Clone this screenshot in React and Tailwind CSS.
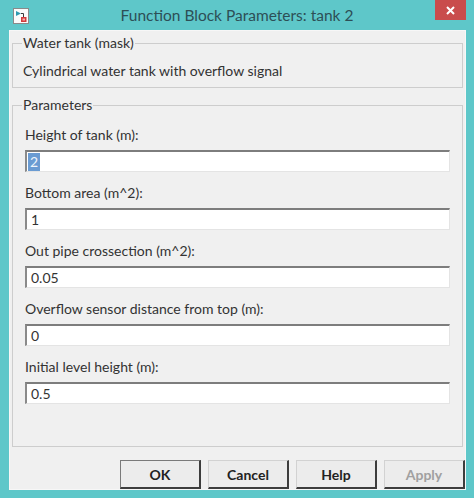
import React from 'react';

const FONT = { fontFamily: 'Lato, "Noto Sans", Arial, sans-serif' };

const params = [
    { label: 'Height of tank (m):', value: '2', selected: true },
    { label: 'Bottom area (m^2):', value: '1' },
    { label: 'Out pipe crossection (m^2):', value: '0.05' },
    { label: 'Overflow sensor distance from top (m):', value: '0' },
    { label: 'Initial level height (m):', value: '0.5' },
];

const BlockIcon = () => (
    <svg width="16" height="16" viewBox="0 0 16 16">
        <rect x="0.5" y="0.5" width="15" height="15" fill="#fbfbfb" stroke="#8a8a8a" />
        <path d="M3 3 L8 5.5 L3 8 Z" fill="#2f9ab0" />
        <path d="M8 5.5 H10.5 V9" stroke="#3a3a3a" strokeWidth="1" fill="none" />
        <rect x="8" y="9" width="5.5" height="5" fill="#d23a3a" />
        <rect x="9.5" y="10.5" width="2.5" height="2" fill="#f5b0b0" />
    </svg>
);

const ParamField = ({ label, value, selected }) => (
    <div className="flex flex-col">
        <label className="h-[20px] leading-[20px] text-[14px] text-[#333]">{label}</label>
        <div className="mt-[5px] h-[22px] bg-white border-t-2 border-l-2 border-t-[#7d7d7d] border-l-[#8a8a8a] border-r border-b border-r-[#e4e4e4] border-b-[#e4e4e4] flex items-center pl-[1px]">
            {selected ? (
                <span className="h-[18px] leading-[18px] px-[2px] bg-[#6a9bd2] text-[#eef4fb] text-[14px]">{value}</span>
            ) : (
                <span className="pl-[3px] leading-[18px] text-[14px] text-[#333]">{value}</span>
            )}
        </div>
    </div>
);

const DialogButton = ({ children, isDefault, disabled }) => (
    <button
        className={
            isDefault
                ? 'w-[81px] h-[29px] bg-[#ececec] border border-[#7a7a7a] border-b-2 border-r-2 border-b-[#3d3d3d] border-r-[#3d3d3d] text-[14px] font-bold text-[#222]'
                : disabled
                ? 'w-[81px] h-[29px] bg-[#ececec] border border-[#d2d2d2] border-b-2 border-r-2 border-b-[#3d3d3d] border-r-[#3d3d3d] text-[14px] font-bold text-[#a0a0a0]'
                : 'w-[81px] h-[29px] bg-[#ececec] border border-[#d2d2d2] border-b-2 border-r-2 border-b-[#3d3d3d] border-r-[#3d3d3d] text-[14px] font-bold text-[#222]'
        }
    >
        {children}
    </button>
);

export default function App() {
    return (
        <div className="w-[474px] h-[498px] bg-[#5ec7c9] flex flex-col overflow-hidden" style={FONT}>
            {/* title bar */}
            <div className="h-[30px] flex items-start shrink-0">
                <div className="w-[60px] pl-[13px] pt-[8px]">
                    <BlockIcon />
                </div>
                <div className="flex-1 text-center text-[15.5px] leading-[30px] text-[#2d4f56]">
                    Function Block Parameters: tank 2
                </div>
                <div className="w-[60px] flex justify-end pr-[8px]">
                    <div className="w-[31px] h-[20px] bg-[#c94c4c] flex items-center justify-center">
                        <svg width="9" height="9" viewBox="0 0 9 9">
                            <path d="M1 1 L8 8 M8 1 L1 8" stroke="#fff" strokeWidth="2" />
                        </svg>
                    </div>
                </div>
            </div>

            {/* body */}
            <div className="ml-[9px] mr-[8px] mb-[8px] flex-1 bg-[#f0f0f0] border border-[#f7f7f7] px-[2px] flex flex-col">
                <fieldset className="mt-[2px] border border-[#cdcdcd] pl-[10px] pr-[10px] pb-[6px]">
                    <legend className="-ml-[1px] px-[1px] h-[20px] leading-[20px] text-[14px] text-[#333]">Water tank (mask)</legend>
                    <div className="mt-[8px] h-[20px] leading-[20px] text-[14px] text-[#333]">
                        Cylindrical water tank with overflow signal
                    </div>
                </fieldset>

                <fieldset className="mt-[7px] border border-[#cdcdcd] pl-[12px] pr-[12px] pb-[42px]">
                    <legend className="-ml-[3px] px-[1px] h-[20px] leading-[20px] text-[14px] text-[#333]">Parameters</legend>
                    <div className="mt-[10px] flex flex-col gap-[11px]">
                        {params.map((p) => (
                            <ParamField key={p.label} {...p} />
                        ))}
                    </div>
                </fieldset>

                <div className="mt-[13px] -mr-[2px] flex justify-end gap-[7px]">
                    <DialogButton isDefault>OK</DialogButton>
                    <DialogButton>Cancel</DialogButton>
                    <DialogButton>Help</DialogButton>
                    <DialogButton disabled>Apply</DialogButton>
                </div>
            </div>
        </div>
    );
}
